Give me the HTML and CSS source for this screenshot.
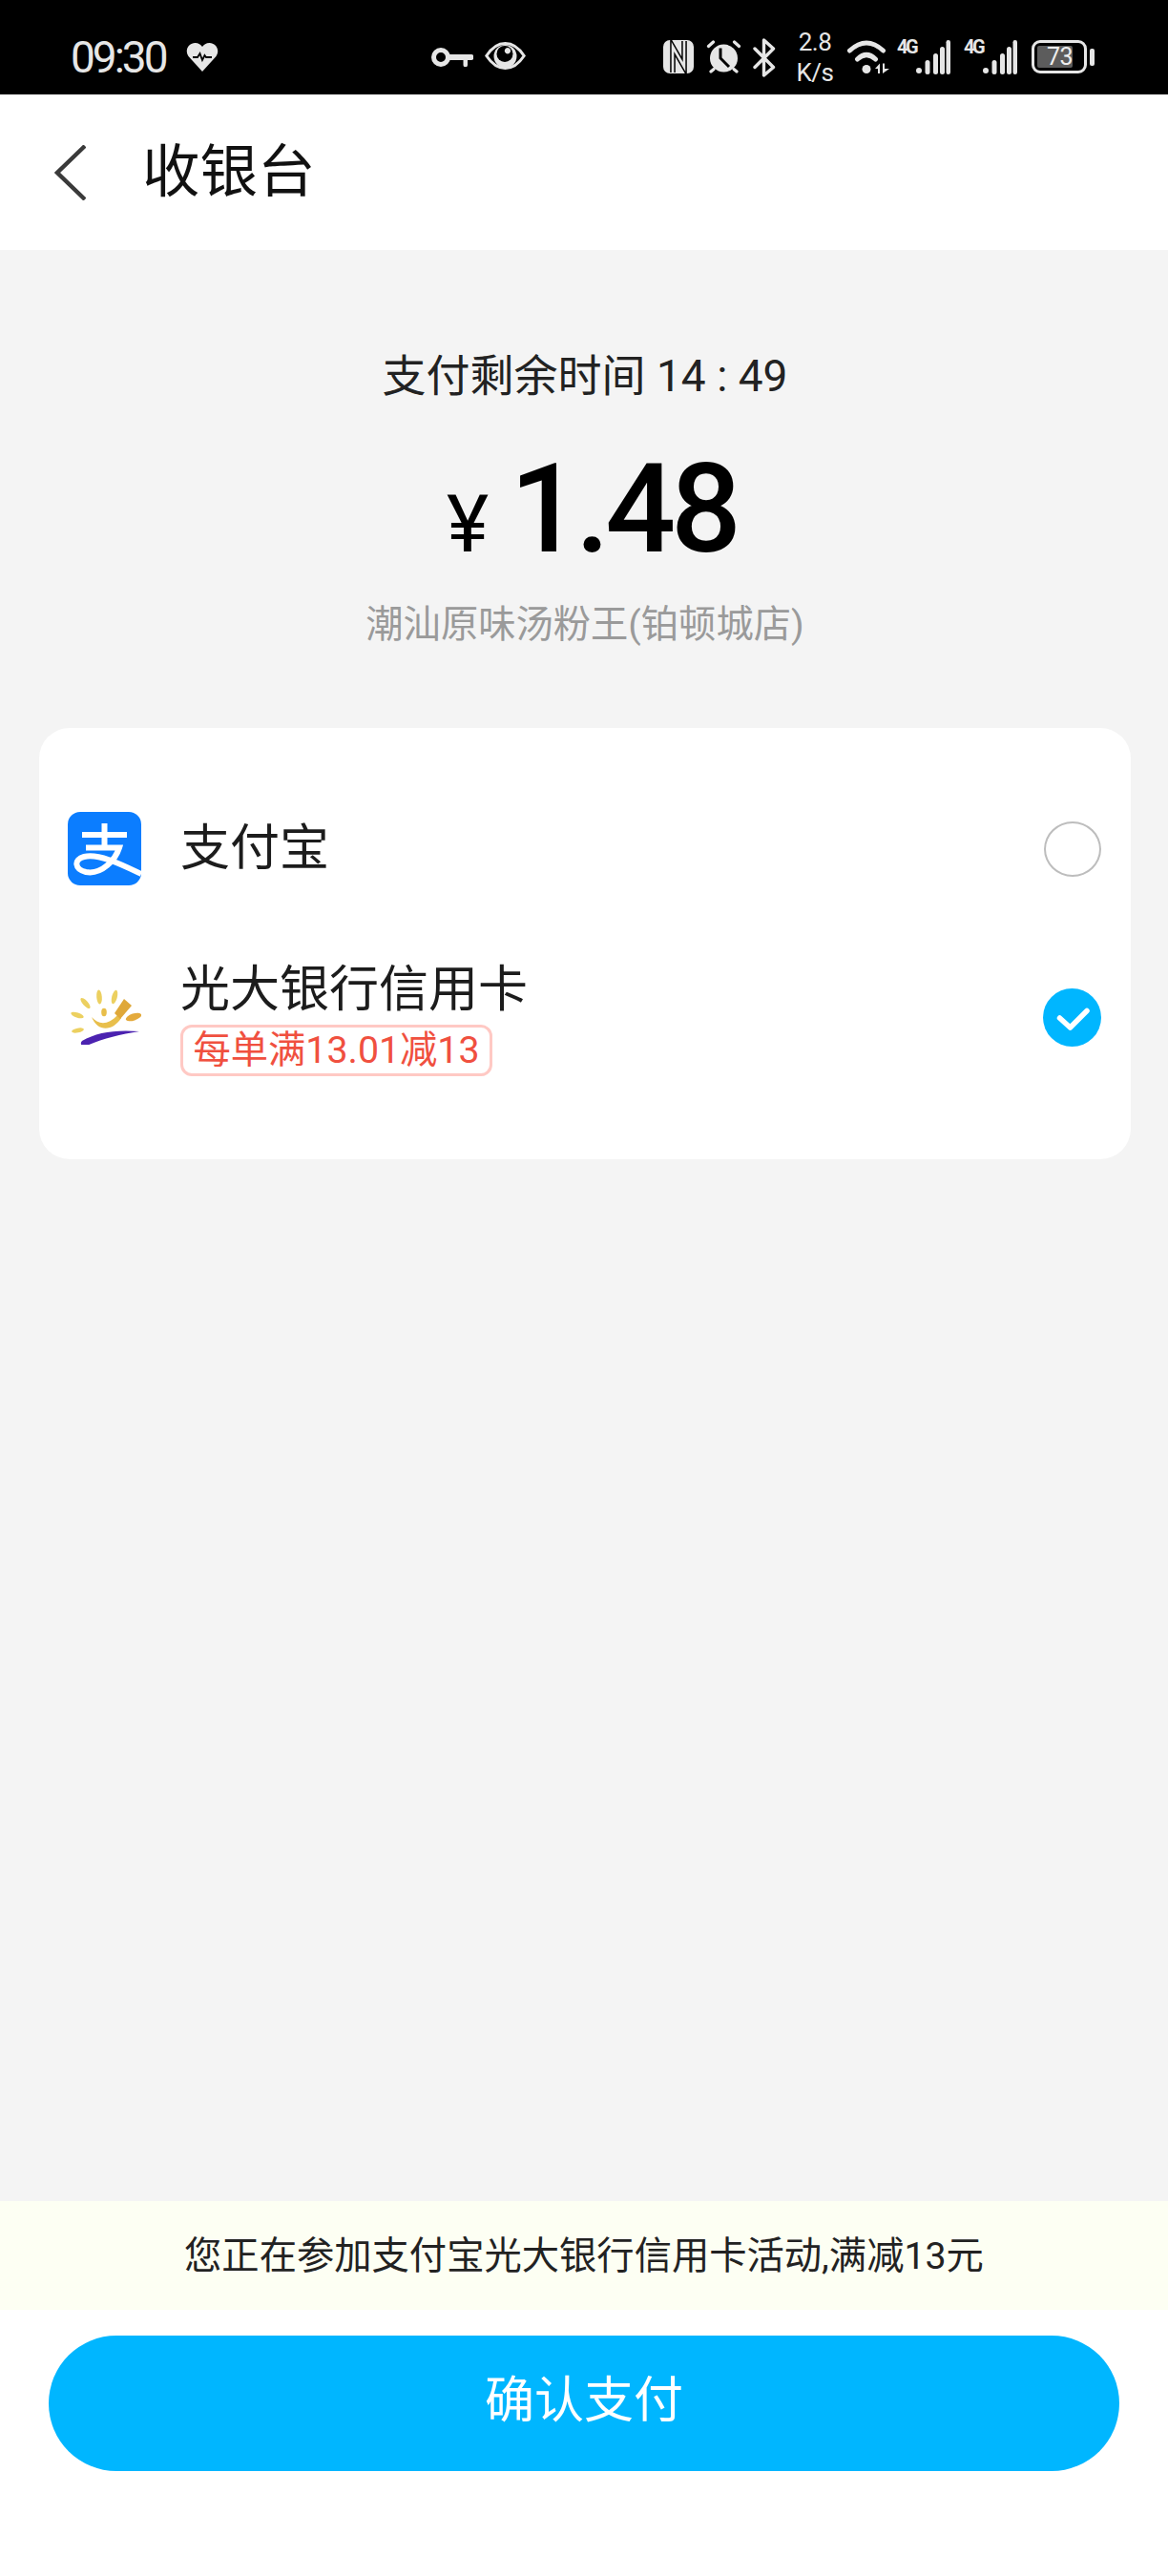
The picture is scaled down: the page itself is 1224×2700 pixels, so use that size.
FILE: index.html
```html
<!DOCTYPE html>
<html lang="zh-CN">
<head>
<meta charset="utf-8">
<title>收银台</title>
<link rel="stylesheet" href="styles.css">
</head>
<body>
<div class="page">
  <div class="status">
    <span class="time">09:30</span>
    <svg class="i-heart" width="34" height="30" viewBox="0 0 34 30"><path fill="#e6e6e6" d="M17 30 L2.5 14 C-2 7 3 0 9.5 0 C13 0 15.5 2 17 4 C18.5 2 21 0 24.5 0 C31 0 36 7 31.5 14 Z"/><path fill="none" stroke="#000" stroke-width="1.8" d="M7 15 h5 l2.5 -4 l2.5 7 l2.5 -5 l1.5 2 h6"/></svg>
    <svg class="i-key" width="44" height="20" viewBox="0 0 44 20"><circle cx="10" cy="10" r="7.5" fill="none" stroke="#e6e6e6" stroke-width="5"/><path fill="#e6e6e6" d="M17 7 H42 a2.5 3 0 0 1 0 6 H38 V18 a2.2 2.2 0 0 1 -4.5 0 V13 H17 Z"/></svg>
    <svg class="i-eye" width="43" height="29" viewBox="0 0 43 29"><path fill="none" stroke="#e6e6e6" stroke-width="3" d="M1.8 14.5 C8 5 15 1.5 21.5 1.5 C28 1.5 35 5 41.2 14.5 C35 24 28 27.5 21.5 27.5 C15 27.5 8 24 1.8 14.5 Z"/><circle cx="21.5" cy="15" r="12" fill="#e6e6e6"/><circle cx="21" cy="12.5" r="8.5" fill="#000"/><circle cx="18.5" cy="10.5" r="5" fill="#000"/><path fill="#e6e6e6" d="M24 6 a3.2 3.2 0 1 1 -0.1 0 Z"/></svg>
    <svg class="i-nfc" width="32" height="35" viewBox="0 0 32 35"><rect width="32" height="35" rx="7" fill="#e6e6e6"/><path fill="none" stroke="#000" stroke-width="5.6" d="M10 34 V7 L22 28 V1"/><path fill="none" stroke="#e6e6e6" stroke-width="2.6" d="M10 35 V7 L22 28 V0"/></svg>
    <svg class="i-alarm" width="37" height="35" viewBox="0 0 37 35"><circle cx="18.5" cy="19" r="14.5" fill="#e6e6e6"/><path stroke="#e6e6e6" stroke-width="3.2" stroke-linecap="round" fill="none" d="M2.5 6.5 L7.5 2 M29.5 2 L34.5 6.5 M5 33 L8 30.5 M32 33 L29 30.5"/><path fill="none" stroke="#000" stroke-width="3" d="M15 8.5 V19 L24 28"/></svg>
    <svg class="i-bt" width="24" height="41" viewBox="0 0 24 41"><path fill="none" stroke="#e6e6e6" stroke-width="3.4" stroke-linejoin="round" stroke-linecap="round" d="M2 11 L21.5 30.5 L11.5 39 V2 L21.5 11 L2 30.5"/></svg>
    <div class="speed"><span>2.8</span><span>K/s</span></div>
    <svg class="i-wifi" width="45" height="35" viewBox="0 0 45 35"><path fill="none" stroke="#e6e6e6" stroke-width="5" stroke-linecap="round" d="M2.5 11 Q20 -5 37.5 11 M10.5 20 Q20 11 29.5 20"/><circle cx="20" cy="30.5" r="4.5" fill="#e6e6e6"/><path fill="#e6e6e6" d="M29 30 L34 24.5 V35 H32 V30 Z M37 24.5 H39 V30 H44 L37 35 Z"/></svg>
    <div class="signal first"><span class="net">4G</span><svg width="36" height="36" viewBox="0 0 36 36"><g fill="#e6e6e6"><circle cx="3" cy="32" r="3"/><rect x="9.5" y="21" width="5" height="15" rx="2.5"/><rect x="18" y="14" width="5" height="22" rx="2.5"/><rect x="25" y="7" width="5" height="29" rx="2.5"/><rect x="31.5" y="0" width="4.5" height="36" rx="2.2"/></g></svg></div>
    <div class="signal"><span class="net">4G</span><svg width="36" height="36" viewBox="0 0 36 36"><g fill="#e6e6e6"><circle cx="3" cy="32" r="3"/><rect x="9.5" y="21" width="5" height="15" rx="2.5"/><rect x="18" y="14" width="5" height="22" rx="2.5"/><rect x="25" y="7" width="5" height="29" rx="2.5"/><rect x="31.5" y="0" width="4.5" height="36" rx="2.2"/></g></svg></div>
    <div class="battery"><div class="battery-body"><span class="battery-fill">73</span></div><span class="battery-nub"></span></div>
  </div>

  <header class="topbar">
    <svg class="back" width="33" height="58" viewBox="0 0 33 58"><path fill="none" stroke="#3a3a3a" stroke-width="4.4" d="M32 1 L3 29 L32 57"/></svg>
    <h1 class="title">收银台</h1>
  </header>

  <main class="main">
    <p class="timer">支付剩余时间 14 : 49</p>
    <div class="amount"><span class="yen">¥</span><span class="value">1.48</span></div>
    <p class="shop">潮汕原味汤粉王(铂顿城店)</p>

    <section class="card">
      <div class="row">
        <svg class="logo" width="77" height="77" viewBox="0 0 77 77"><rect width="77" height="77" rx="13" fill="#0b7dff"/><path fill="none" stroke="#fff" stroke-width="6" d="M15 24 H62 M38.5 12 V38 M19 37.5 H54 C50 50 36 66 19 63 C7 60 6 50 17 47 C32 43 56 55 77 65"/></svg>
        <div class="info"><div class="name">支付宝</div></div>
        <span class="radio"></span>
      </div>
      <div class="row">
        <svg class="logo bank" width="77" height="62" viewBox="0 0 77 62"><g fill="#ecd060"><ellipse cx="33" cy="12" rx="2.8" ry="7.5" transform="rotate(-5 33 12)"/><ellipse cx="49" cy="12" rx="2.8" ry="7.5" transform="rotate(14 49 12)"/><ellipse cx="18.5" cy="18.5" rx="2.7" ry="7" transform="rotate(-42 18.5 18.5)"/><ellipse cx="10" cy="31" rx="2.5" ry="7" transform="rotate(-72 10 31)"/><ellipse cx="10.5" cy="47" rx="2.3" ry="6.5" transform="rotate(78 10.5 47)"/></g><ellipse cx="69" cy="33" rx="3.6" ry="8.5" transform="rotate(72 69 33)" fill="#e4aa3c"/><ellipse cx="38" cy="28" rx="2.8" ry="4.2" fill="#e8be4a"/><path fill="#e8bf4c" d="M25 33 C32 41 42 42 52 31 L56 34 C48 47 32 50 25 33 Z"/><path fill="#dfa83a" d="M49 29 L59 14 L67 21 L55 35 Z"/><path fill="#4b22b0" d="M15 58 C30 49 50 46 75 48 C55 51 35 56 20 63 C15 65 12 61 15 58 Z"/></svg>
        <div class="info">
          <div class="name">光大银行信用卡</div>
          <span class="tag">每单满13.01减13</span>
        </div>
        <svg class="check" width="61" height="61" viewBox="0 0 61 61"><circle cx="30.5" cy="30.5" r="30.5" fill="#00b6ff"/><path fill="none" stroke="#fff" stroke-width="5.5" stroke-linecap="round" stroke-linejoin="round" d="M17.5 31 L28.5 41 L46 23.5"/></svg>
      </div>
    </section>
  </main>

  <div class="notice">您正在参加支付宝光大银行信用卡活动,满减13元</div>
  <div class="footer"><button class="pay">确认支付</button></div>
</div>
</body>
</html>
```

FILE: styles.css
```css
* { box-sizing: border-box; }
html, body { margin: 0; padding: 0; background: #fff; }
body { font-family: Roboto, "Noto Sans CJK SC", sans-serif; color: #222; }
.page { width: 1224px; height: 2700px; display: flex; flex-direction: column; }

.status { height: 99px; flex: none; background: #000; color: #e6e6e6; display: flex; align-items: center; padding: 20px 0 0 74px; }
.time { font-size: 46px; font-weight: 400; letter-spacing: -3px; line-height: 46px; width: 121px; }
.i-key { margin-left: 223px; }
.i-eye { margin-left: 12px; margin-top: -2px; }
.i-nfc { margin-left: 144px; }
.i-alarm { margin-left: 13px; }
.i-bt { margin-left: 12px; margin-top: 2px; }
.speed { margin-left: 21px; width: 40px; display: flex; flex-direction: column; align-items: center; font-size: 26px; font-weight: 400; line-height: 32px; letter-spacing: -0.5px; }
.i-wifi { margin-left: 14px; margin-right: 7px; }
.signal { display: flex; align-items: flex-start; height: 36px; margin-left: 14px; }
.signal.first { margin-left: 0; }
.net { width: 20px; font-size: 20px; line-height: 15px; height: 15px; font-weight: 700; letter-spacing: -2.4px; }
.battery { display: flex; align-items: center; margin-left: 15px; gap: 3px; }
.battery-body { width: 58px; height: 35px; border: 3px solid #e6e6e6; border-radius: 9px; padding: 3px 0 0 3px; }
.battery-fill { display: block; width: 37px; height: 23px; background: #5c5c5c; border-radius: 2px; color: #eee; font-size: 25px; line-height: 23px; font-weight: 400; text-align: right; letter-spacing: -0.5px; }
.battery-nub { width: 5px; height: 18px; background: #e6e6e6; border-radius: 2px; }

.topbar { height: 163px; flex: none; background: #fff; display: flex; align-items: center; padding-left: 57px; }
.title { margin: 0 0 0 59px; font-size: 60.5px; font-weight: 400; color: #111; line-height: 70px; }

.main { flex: 1; background: #f4f4f4; padding: 101px 39px 0 41px; display: flex; flex-direction: column; }
.timer { margin: 0; text-align: center; font-size: 46px; line-height: 62px; color: #222; }
.amount { margin-top: 44px; height: 130px; padding-left: 14px; display: flex; justify-content: center; align-items: baseline; color: #000; }
.yen { font-size: 84px; line-height: 130px; margin-right: 22px; }
.value { font-size: 130px; line-height: 130px; font-weight: 500; letter-spacing: -5px; }
.shop { margin: 28px 0 0; text-align: center; font-size: 39.3px; line-height: 56px; color: #9a9a9a; }

.card { margin-top: 80px; height: 452px; background: #fff; border-radius: 32px; padding: 38px 31px 0 30px; }
.row { height: 177px; display: flex; align-items: center; }
.logo { flex: none; }
.bank { margin-top: -6px; }
.info { flex: 1; margin-left: 41px; display: flex; flex-direction: column; align-items: flex-start; }
.name { font-size: 52px; line-height: 64px; color: #1c1c1c; }
.tag { margin-top: 4px; height: 54px; width: 327px; display: flex; align-items: center; justify-content: center; border: 3px solid #ffc9c4; border-radius: 12px; color: #f0503f; font-size: 39.3px; line-height: 48px; white-space: nowrap; }
.radio { width: 60px; height: 58px; border: 2px solid #bdbdbd; border-radius: 50%; flex: none; }
.check { flex: none; }

.notice { height: 114px; flex: none; background: #fdfff3; padding-bottom: 8px; display: flex; align-items: center; justify-content: center; font-size: 39.3px; color: #222; }
.footer { height: 279px; flex: none; background: #fff; padding: 27px 51px 0; }
.pay { display: block; width: 1122px; height: 142px; border: 0; border-radius: 71px; background: #00b6ff; color: #fff; font: inherit; font-size: 52px; padding: 0 0 16px; }
```
